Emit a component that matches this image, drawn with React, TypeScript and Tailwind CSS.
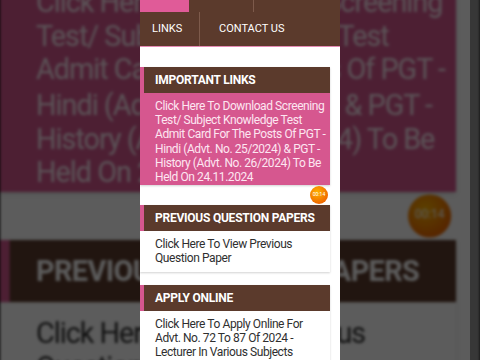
import React from "react";

type CardProps = {
  title: string;
  lines: string[];
  pink?: boolean;
  className?: string;
};

const Card = ({ title, lines, pink, className }: CardProps) => (
  <div className={`w-[190px] shadow-[0_1px_2px_rgba(0,0,0,0.18)] ${className ?? ""}`}>
    <div className="flex h-[26px] items-center border-l-4 border-[#d6578f] bg-[#5b3a2c] pl-[11px] text-[12px] font-bold tracking-[-0.02em] text-white">
      {title}
    </div>
    {pink ? (
      <div className="bg-[#d6578f] pl-[15px] pt-[6px] pb-[1px] text-[12px] leading-[14.2px] tracking-[-0.035em] text-[#fde6f1]">
        {lines.map(l => <div key={l}>{l}</div>)}
      </div>
    ) : (
      <div className="bg-white pl-[15px] pt-[6px] pb-[6px] text-[12px] leading-[14.2px] tracking-[-0.035em] text-[#2f2f2f]">
        {lines.map(l => <div key={l}>{l}</div>)}
      </div>
    )}
  </div>
);

const Screen = () => (
  <div className="relative h-[360px] w-[200px] overflow-hidden bg-white font-['Roboto',sans-serif]">
    <nav className="bg-[#5b3a2c] text-[11px] text-white">
      <div className="-mt-[22px] flex h-[34px]">
        <div className="h-full w-[60px] bg-[#e05b98]" />
        <div className="flex h-full w-[81px] items-center justify-center border-r border-[#7d5a4b]">ABOUT US</div>
        <div className="flex h-full items-center pl-[13px]">NOTIFICATION</div>
      </div>
      <div className="flex h-[34px]">
        <div className="flex h-full w-[60px] items-center border-r border-[#7d5a4b] pl-3">LINKS</div>
        <div className="flex h-full items-center pl-[19px]">CONTACT US</div>
      </div>
    </nav>
    <div className="h-px bg-[#e58ab3]" />

    <Card
      className="mt-[20px]"
      pink
      title="IMPORTANT LINKS"
      lines={[
        "Click Here To Download Screening",
        "Test/ Subject Knowledge Test",
        "Admit Card For The Posts Of PGT -",
        "Hindi (Advt. No. 25/2024) & PGT -",
        "History (Advt. No. 26/2024) To Be",
        "Held On 24.11.2024",
      ]}
    />
    <Card
      className="mt-[20px]"
      title="PREVIOUS QUESTION PAPERS"
      lines={["Click Here To View Previous", "Question Paper"]}
    />
    <Card
      className="mt-[13px]"
      title="APPLY ONLINE"
      lines={[
        "Click Here To Apply Online For",
        "Advt. No. 72 To 87 Of 2024 -",
        "Lecturer In Various Subjects",
      ]}
    />

    <div className="absolute left-[170px] top-[186px] flex h-[18px] w-[18px] items-center justify-center rounded-full bg-[radial-gradient(circle_at_40%_35%,#ffb300,#f06a00_70%)] text-[5px] text-white">
      00:14
    </div>
  </div>
);

export default function App() {
  return (
    <div className="relative h-[360px] w-[480px] overflow-hidden bg-black">
      <div className="absolute inset-0 flex scale-[2.4] justify-center blur-[0.7px] brightness-[0.36]">
        <Screen />
      </div>
      <div className="absolute right-0 top-0 h-full w-[10px] bg-black/40" />
      <div className="relative flex justify-center">
        <Screen />
      </div>
    </div>
  );
}
